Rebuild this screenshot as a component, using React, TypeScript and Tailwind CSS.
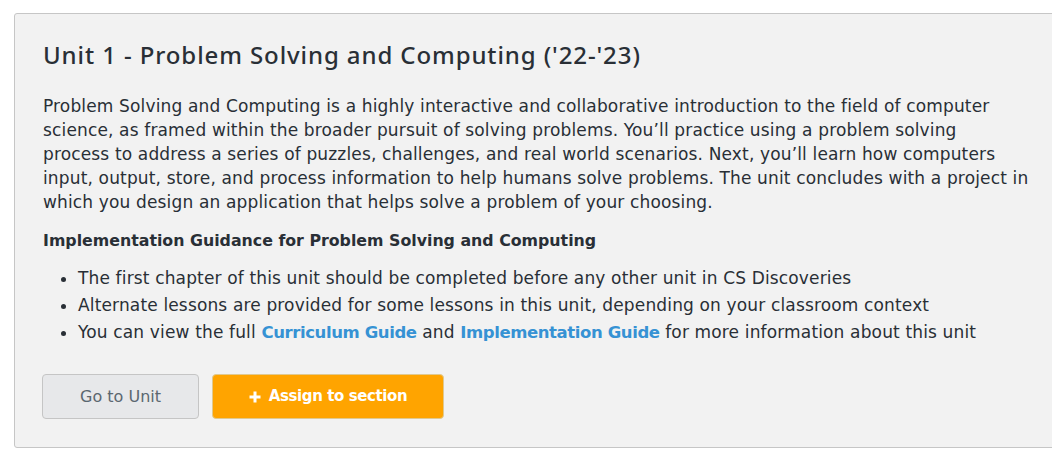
const lines = [
  'Problem Solving and Computing is a highly interactive and collaborative introduction to the field of computer',
  'science, as framed within the broader pursuit of solving problems. You\u2019ll practice using a problem solving',
  'process to address a series of puzzles, challenges, and real world scenarios. Next, you\u2019ll learn how computers',
  'input, output, store, and process information to help humans solve problems. The unit concludes with a project in',
  'which you design an application that helps solve a problem of your choosing.',
];

export default function App() {
  return (
    <div className="w-[1052px] h-[460px] overflow-hidden bg-white pt-[13px] pl-[14px] font-['DejaVu_Sans',sans-serif] text-[#292f36]">
      <div className="w-[1060px] h-[435px] rounded-[3px] border border-[#c6c6c6] bg-[#f2f2f2] pl-[27px] pt-[26px]">
        <h2 className="font-['Noto_Sans',sans-serif] text-[24px] leading-[30px] font-medium tracking-[0.9px] pl-[1px]">
          Unit 1 - Problem Solving and Computing ('22-'23)
        </h2>

        <div className="mt-[24px] pl-[1px] text-[17px] leading-[24px] tracking-[0.15px]">
          {lines.map((l) => (
            <p key={l} className="whitespace-nowrap">{l}</p>
          ))}
        </div>

        <h4 className="mt-[15px] pl-[1px] text-[15.8px] leading-[24px] font-bold">
          Implementation Guidance for Problem Solving and Computing
        </h4>

        <ul className="mt-[12px] text-[17px] leading-[27px] tracking-[0.15px] list-disc pl-[36px]">
          <li>The first chapter of this unit should be completed before any other unit in CS Discoveries</li>
          <li>Alternate lessons are provided for some lessons in this unit, depending on your classroom context</li>
          <li>
            You can view the full{' '}
            <a className="font-bold text-[16.5px] tracking-[-0.4px] text-[#3692d4]">Curriculum Guide</a> and{' '}
            <a className="font-bold text-[16.5px] tracking-[-0.4px] text-[#3692d4]">Implementation Guide</a> for more
            information about this unit
          </li>
        </ul>

        <div className="mt-[28px] flex gap-[13px]">
          <button className="w-[157px] h-[45px] rounded-[4px] border border-[#c5c5c5] bg-[#e7e8ea] text-[16px] text-[#5b6770]">
            Go to Unit
          </button>
          <button className="w-[232px] h-[45px] rounded-[4px] border border-[#e0c98f] bg-[#ffa400] text-[15px] tracking-[-0.4px] font-bold text-white flex items-center justify-center gap-[8px]">
            <svg width="12" height="12" viewBox="0 0 12 12">
              <path d="M6 0.5v11M0.5 6h11" stroke="white" strokeWidth="3" />
            </svg>
            Assign to section
          </button>
        </div>
      </div>
    </div>
  );
}
